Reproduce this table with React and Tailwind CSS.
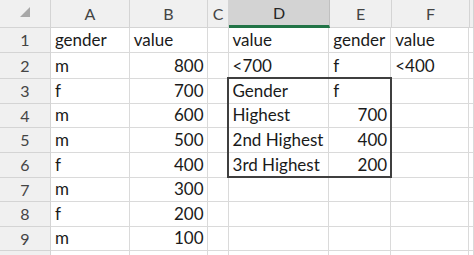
import React from "react";

const cols = [
  { key: "A", w: "w-[79px]" },
  { key: "B", w: "w-[78px]" },
  { key: "C", w: "w-[21px]" },
  { key: "D", w: "w-[101px]" },
  { key: "E", w: "w-[62px]" },
  { key: "F", w: "w-[78px]" },
  { key: "G", w: "flex-1" },
];

const rows = [
  { n: 1, h: "h-[25px]", c: ["gender", "value", "", "value", "gender", "value", ""] },
  { n: 2, h: "h-[26px]", c: ["m", "800", "", "<700", "f", "<400", ""] },
  { n: 3, h: "h-[25px]", c: ["f", "700", "", "Gender", "f", "", ""] },
  { n: 4, h: "h-[24px]", c: ["m", "600", "", "Highest", "700", "", ""] },
  { n: 5, h: "h-[25px]", c: ["m", "500", "", "2nd Highest", "400", "", ""] },
  { n: 6, h: "h-[25px]", c: ["f", "400", "", "3rd Highest", "200", "", ""] },
  { n: 7, h: "h-[24px]", c: ["m", "300", "", "", "", "", ""] },
  { n: 8, h: "h-[25px]", c: ["f", "200", "", "", "", "", ""] },
  { n: 9, h: "h-[24px]", c: ["m", "100", "", "", "", "", ""] },
  { n: "", h: "h-[10px]", c: ["", "", "", "", "", "", ""] },
];

const isNum = (s) => /^\d+$/.test(s);

export default function App() {
  return (
    <div
      className="relative w-[474px] h-[255px] overflow-hidden bg-white text-[#1a1a1a]"
      style={{ fontFamily: "Lato, 'Open Sans', sans-serif" }}
    >
      {/* header row */}
      <div className="flex h-[28px]">
        <div className="w-[51px] h-full bg-[#f0f0f0] border-r border-b border-[#d4d4d4] relative">
          <div className="absolute left-[20px] top-[7px] w-0 h-0 border-l-[10px] border-l-transparent border-b-[10px] border-b-[#a8a8a8]" />
        </div>
        {cols.map((c) => (
          <div
            key={c.key}
            className={`${c.w} h-full flex items-center justify-center text-[16px] border-r ${
              c.key === "D"
                ? "bg-[#d3d3d3] text-[#262626] border-[#c0c0c0] border-b-[3px] border-b-[#217346]"
                : "bg-[#f0f0f0] text-[#444] border-[#d4d4d4] border-b"
            } ${c.key === "G" ? "" : ""}`}
          >
            {c.key === "G" ? "" : c.key}
          </div>
        ))}
      </div>
      {rows.map((r, ri) => (
        <div key={ri} className={`flex ${r.h}`}>
          <div className="w-[51px] h-full bg-[#f0f0f0] border-r border-b border-[#d4d4d4] flex items-center justify-center text-[16px] text-[#444]">
            {r.n}
          </div>
          {cols.map((c, ci) => {
            const v = r.c[ci];
            const num = isNum(v);
            return (
              <div
                key={c.key}
                className={`${c.w} h-full border-r border-b border-[#dadada] flex items-end pb-[1px] text-[17px] leading-[22px] whitespace-nowrap overflow-visible ${
                  num ? "justify-end pr-[3px]" : "justify-start pl-[4px]"
                }`}
              >
                {v}
              </div>
            );
          })}
        </div>
      ))}
      {/* selection box D3:E6 */}
      <div className="absolute left-[227px] top-[77px] w-[165px] h-[101px] border-2 border-[#3f3f3f] pointer-events-none" />
    </div>
  );
}
